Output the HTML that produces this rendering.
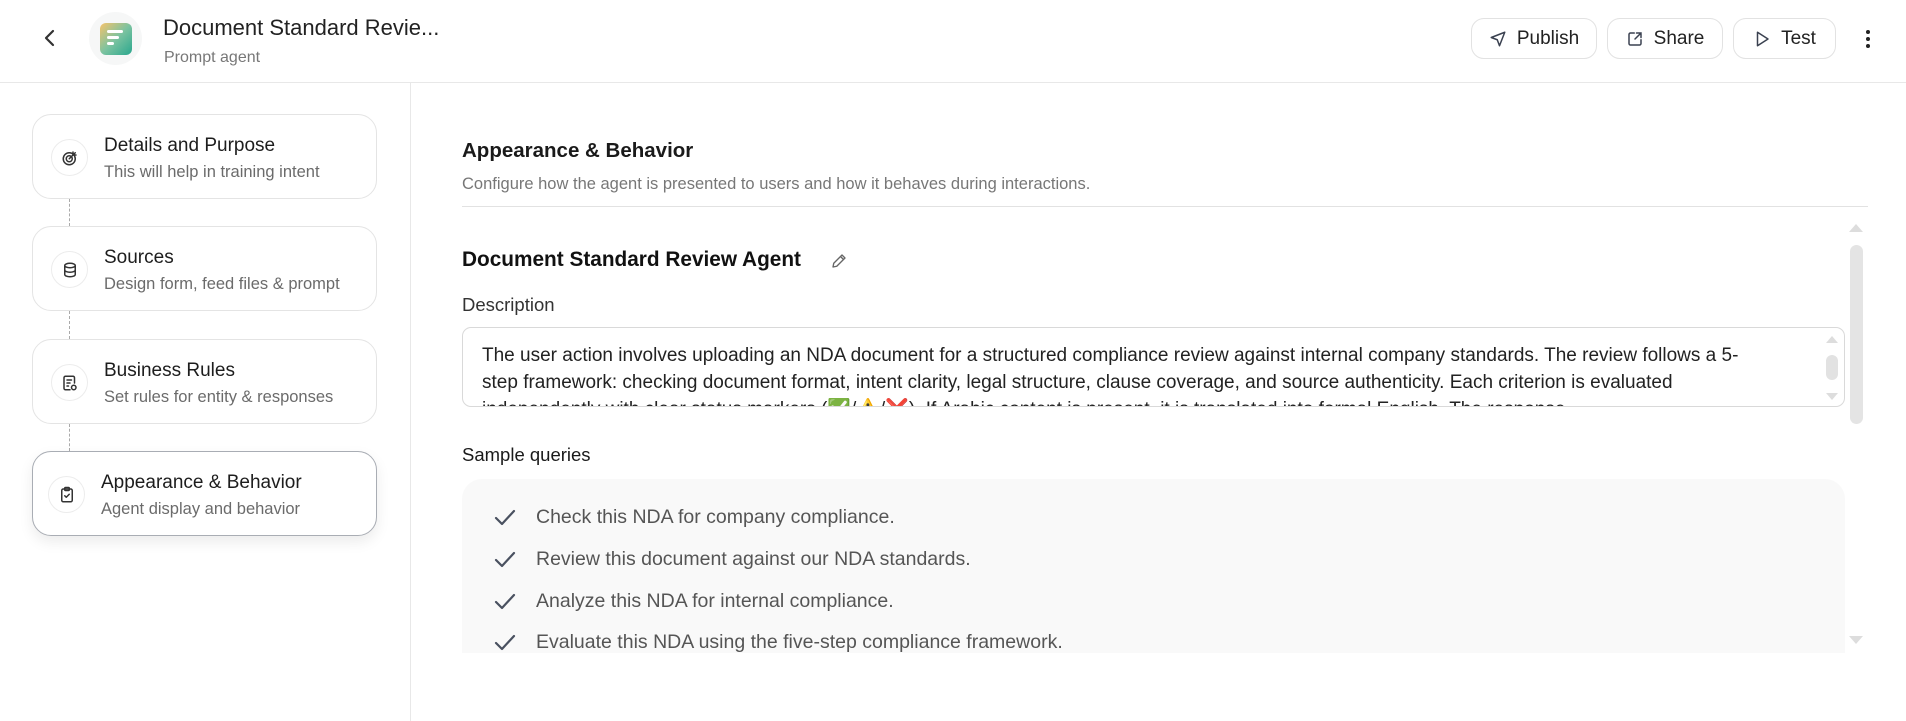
<!DOCTYPE html>
<html><head><meta charset="utf-8"><style>
*{box-sizing:border-box;margin:0;padding:0}
body{width:1906px;height:721px;overflow:hidden;background:#fff;font-family:"Liberation Sans",sans-serif;color:#1a1a1a;position:relative}
.a{position:absolute}
.hdr{left:0;top:0;width:1906px;height:83px;border-bottom:1px solid #e8e8e8}
.btn{top:18px;height:41px;border:1px solid #e2e2e2;border-radius:13px;display:flex;align-items:center;justify-content:center;gap:10px;font-size:19px;color:#222}
.card{left:32px;width:345px;height:85px;border:1px solid #e4e4e4;border-radius:19px;background:#fff}
.card .ic{position:absolute;left:18px;top:24px;width:37px;height:37px;border-radius:50%;border:1px solid #ececec;display:flex;align-items:center;justify-content:center}
.card .t{position:absolute;left:71px;top:20px;font-size:19px;color:#1d1d1d}
.card .s{position:absolute;left:71px;top:48px;font-size:16.5px;color:#6b6b6b}
.dash{left:69px;width:0;border-left:1px dashed #aaa}
.q{position:absolute;left:32px;font-size:19.5px;color:#555;display:flex;align-items:center;gap:20px}
</style></head><body>
<div class="a hdr"></div>
<svg class="a" style="left:40px;top:28px" width="20" height="20" viewBox="0 0 20 20"><path d="M13 3L6 10l7 7" fill="none" stroke="#333" stroke-width="2.2" stroke-linecap="round" stroke-linejoin="round"/></svg>
<div class="a" style="left:89px;top:12px;width:53px;height:53px;border-radius:50%;background:#f6f7f7"></div>
<div class="a" style="left:100px;top:23px;width:32px;height:32px;border-radius:6px;background:linear-gradient(135deg,#f6c36b 0%,#7cc3a0 50%,#2aa78e 100%)"></div>
<div class="a" style="left:107px;top:30px;width:16px;height:2.5px;background:#fff;border-radius:2px"></div>
<div class="a" style="left:107px;top:36px;width:12px;height:2.5px;background:#fff;border-radius:2px"></div>
<div class="a" style="left:107px;top:42px;width:7px;height:2.5px;background:#fff;border-radius:2px"></div>
<div class="a" style="left:163px;top:15px;font-size:22px;color:#222">Document Standard Revie...</div>
<div class="a" style="left:164px;top:49px;font-size:16px;color:#777">Prompt agent</div>

<div class="a btn" style="left:1471px;width:126px"><svg width="18" height="18" viewBox="0 0 24 24" fill="none" stroke="#3a4150" stroke-width="2" stroke-linejoin="round"><path d="M21 3L3 10l8 3 3 8z"/></svg>Publish</div>
<div class="a btn" style="left:1607px;width:116px"><svg width="18" height="18" viewBox="0 0 24 24" fill="none" stroke="#3a4150" stroke-width="2" stroke-linecap="round"><path d="M11 4H6a2 2 0 0 0-2 2v12a2 2 0 0 0 2 2h12a2 2 0 0 0 2-2v-5"/><path d="M14 4h6v6M20 4l-8 8"/></svg>Share</div>
<div class="a btn" style="left:1733px;width:103px"><svg width="18" height="18" viewBox="0 0 24 24" fill="none" stroke="#3a4150" stroke-width="2" stroke-linejoin="round"><path d="M6 3l14 9-14 9z"/></svg>Test</div>
<div class="a" style="left:1866px;top:30px;width:4px;height:4px;border-radius:50%;background:#222;box-shadow:0 7px 0 #222,0 14px 0 #222"></div>

<div class="a" style="left:410px;top:83px;width:1px;height:638px;background:#e8e8e8"></div>

<div class="a dash" style="top:199px;height:27px"></div>
<div class="a dash" style="top:311px;height:28px"></div>
<div class="a dash" style="top:424px;height:27px"></div>

<div class="a card" style="top:114px"><div class="ic"><svg width="18" height="18" viewBox="0 0 24 24" fill="none" stroke="#333" stroke-width="2" stroke-linecap="round"><circle cx="11" cy="13" r="8"/><circle cx="11" cy="13" r="4"/><path d="M11 13l8-8M16 4v4h4"/></svg></div><div class="t">Details and Purpose</div><div class="s">This will help in training intent</div></div>
<div class="a card" style="top:226px"><div class="ic"><svg width="18" height="18" viewBox="0 0 24 24" fill="none" stroke="#333" stroke-width="2"><ellipse cx="12" cy="6" rx="7" ry="3"/><path d="M5 6v12c0 1.7 3 3 7 3s7-1.3 7-3V6M5 12c0 1.7 3 3 7 3s7-1.3 7-3"/></svg></div><div class="t">Sources</div><div class="s">Design form, feed files &amp; prompt</div></div>
<div class="a card" style="top:339px"><div class="ic"><svg width="18" height="18" viewBox="0 0 24 24" fill="none" stroke="#333" stroke-width="2" stroke-linecap="round"><path d="M12 21H6a2 2 0 0 1-2-2V5a2 2 0 0 1 2-2h10a2 2 0 0 1 2 2v7M8 8h6M8 12h4M8 16h2"/><circle cx="17" cy="18" r="3"/></svg></div><div class="t">Business Rules</div><div class="s">Set rules for entity &amp; responses</div></div>
<div class="a card" style="top:451px;border-color:#a9adb4;box-shadow:0 6px 14px rgba(0,0,0,.08)"><div class="ic" style="left:15px"><svg width="18" height="18" viewBox="0 0 24 24" fill="none" stroke="#333" stroke-width="2" stroke-linecap="round" stroke-linejoin="round"><rect x="5" y="4" width="14" height="17" rx="2"/><rect x="9" y="2" width="6" height="4" rx="1"/><path d="M9 13l2 2 4-4"/></svg></div><div class="t" style="left:68px">Appearance &amp; Behavior</div><div class="s" style="left:68px">Agent display and behavior</div></div>

<div class="a" style="left:462px;top:139px;font-size:20.5px;font-weight:bold;color:#1a1a1a">Appearance &amp; Behavior</div>
<div class="a" style="left:462px;top:175px;font-size:16.5px;color:#777">Configure how the agent is presented to users and how it behaves during interactions.</div>
<div class="a" style="left:462px;top:206px;width:1406px;height:1px;background:#e2e2e2"></div>

<div class="a" style="left:462px;top:248px;font-size:20.8px;font-weight:bold;color:#111">Document Standard Review Agent</div>
<svg class="a" style="left:830px;top:252px" width="18" height="18" viewBox="0 0 24 24" fill="none" stroke="#666" stroke-width="1.8" stroke-linejoin="round"><path d="M4 20l1-5L16 4l4 4L9 19z M14 6l4 4"/></svg>
<div class="a" style="left:462px;top:294px;font-size:18.5px;color:#333">Description</div>

<div class="a" style="left:462px;top:327px;width:1383px;height:80px;border:1px solid #d9d9d9;border-radius:9px;overflow:hidden">
<div style="position:absolute;left:19px;top:14px;width:1280px;font-size:19px;line-height:27px;color:#222">The user action involves uploading an NDA document for a structured compliance review against internal company standards. The review follows a 5-step framework: checking document format, intent clarity, legal structure, clause coverage, and source authenticity. Each criterion is evaluated independently with clear status markers (✅/⚠️/❌). If Arabic content is present, it is translated into formal English. The response ...</div>
<div style="position:absolute;right:6px;top:8px;border:6px solid transparent;border-bottom:7px solid #ddd;border-top:0"></div>
<div style="position:absolute;right:6px;top:27px;width:12px;height:25px;border-radius:6px;background:#e2e2e2"></div>
<div style="position:absolute;right:6px;bottom:6px;border:6px solid transparent;border-top:7px solid #ddd;border-bottom:0"></div>
</div>

<div class="a" style="left:1849px;top:224px;border:7px solid transparent;border-bottom:8px solid #ddd;border-top:0"></div>
<div class="a" style="left:1850px;top:245px;width:13px;height:179px;border-radius:7px;background:#e4e4e4"></div>
<div class="a" style="left:1849px;top:636px;border:7px solid transparent;border-top:8px solid #ddd;border-bottom:0"></div>

<div class="a" style="left:462px;top:444px;font-size:18.5px;color:#1a1a1a">Sample queries</div>
<div class="a" style="left:462px;top:479px;width:1383px;height:174px;background:#f9f9f9;border-radius:20px 20px 0 0;overflow:hidden">
<div class="q" style="top:27px"><svg width="22" height="18" viewBox="0 0 22 18"><path d="M2 9l6 6L20 2" fill="none" stroke="#4a5160" stroke-width="2.2" stroke-linecap="round" stroke-linejoin="round"/></svg>Check this NDA for company compliance.</div>
<div class="q" style="top:69px"><svg width="22" height="18" viewBox="0 0 22 18"><path d="M2 9l6 6L20 2" fill="none" stroke="#4a5160" stroke-width="2.2" stroke-linecap="round" stroke-linejoin="round"/></svg>Review this document against our NDA standards.</div>
<div class="q" style="top:111px"><svg width="22" height="18" viewBox="0 0 22 18"><path d="M2 9l6 6L20 2" fill="none" stroke="#4a5160" stroke-width="2.2" stroke-linecap="round" stroke-linejoin="round"/></svg>Analyze this NDA for internal compliance.</div>
<div class="q" style="top:152px"><svg width="22" height="18" viewBox="0 0 22 18"><path d="M2 9l6 6L20 2" fill="none" stroke="#4a5160" stroke-width="2.2" stroke-linecap="round" stroke-linejoin="round"/></svg>Evaluate this NDA using the five-step compliance framework.</div>
</div>
</body></html>
